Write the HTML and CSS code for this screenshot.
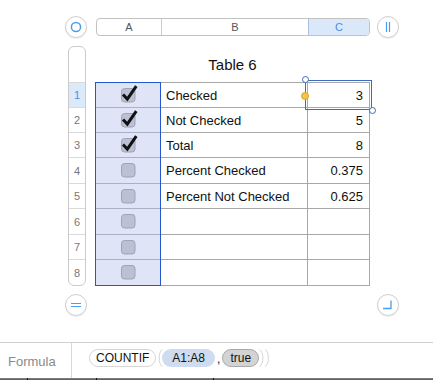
FILE: index.html
```html
<!DOCTYPE html>
<html>
<head>
  <meta charset="utf-8">
  <meta name="viewport" content="width=device-width">
  <title>Table 6</title>
  <link rel="stylesheet" href="styles.css">
</head>
<body>

  <div class="toolbar">
    <button class="round">
      <svg width="12" height="12" viewBox="0 0 12 12"><circle cx="6" cy="6" r="4.6" fill="none" stroke="#4a9cf0" stroke-width="1.5"/></svg>
    </button>
    <div class="colheads">
      <div class="ch cola">A</div>
      <div class="ch colb">B</div>
      <div class="ch colc sel">C</div>
    </div>
    <button class="round">
      <svg width="12" height="12" viewBox="0 0 12 12"><path d="M4.5 1v10M7.5 1v10" stroke="#4a9cf0" stroke-width="1.2"/></svg>
    </button>
  </div>

  <div class="sheet">
    <div class="rowheads">
      <div class="rh cap"></div>
      <div class="rh sel">1</div>
      <div class="rh">2</div>
      <div class="rh">3</div>
      <div class="rh">4</div>
      <div class="rh">5</div>
      <div class="rh">6</div>
      <div class="rh">7</div>
      <div class="rh">8</div>
    </div>

    <div class="tablewrap">
      <div class="title">Table 6</div>
      <div class="grid" id="grid">
        <div class="colsel"></div>
        <div class="cellsel">
          <span class="handle tl"></span>
          <span class="handle br"></span>
          <span class="dot"></span>
        </div>
      </div>
    </div>
  </div>

  <div class="bottom">
    <button class="round">
      <svg width="12" height="12" viewBox="0 0 12 12"><path d="M1 4.5h10M1 7.5h10" stroke="#4a9cf0" stroke-width="1.2"/></svg>
    </button>
    <button class="round">
      <svg width="12" height="12" viewBox="0 0 12 12"><path d="M9 1.5v8h-8" fill="none" stroke="#4a9cf0" stroke-width="1.3"/></svg>
    </button>
  </div>

  <div class="formula">
    <div class="flabel">Formula</div>
    <div class="fbody">
      <span class="pill fn">COUNTIF</span>
      <svg class="paren" width="7" height="18" viewBox="0 0 7 18"><path d="M6.5 0.5C2 2.5 2 15.5 6.5 17.5" fill="none" stroke="#d6d6d6"/></svg>
      <span class="pill ref">A1:A8</span>
      <span class="comma">,</span>
      <span class="pill val">true</span>
      <svg class="paren" width="13" height="18" viewBox="0 0 13 18"><path d="M0.5 0.5C5 2.5 5 15.5 0.5 17.5M6 0.5C10.5 2.5 10.5 15.5 6 17.5" fill="none" stroke="#d6d6d6"/></svg>
    </div>
  </div>

  <div class="strip">
    <span></span><span></span><span></span>
  </div>

  <script>
    const rows = [
      { on: true,  label: 'Checked',             num: '3' },
      { on: true,  label: 'Not Checked',         num: '5' },
      { on: true,  label: 'Total',               num: '8' },
      { on: false, label: 'Percent Checked',     num: '0.375' },
      { on: false, label: 'Percent Not Checked', num: '0.625' },
      { on: false, label: '', num: '' },
      { on: false, label: '', num: '' },
      { on: false, label: '', num: '' }
    ];

    const box = on => `<svg width="18" height="18" viewBox="0 0 18 18">
        <rect x="1.5" y="3.5" width="13.5" height="13.5" rx="3" fill="#bcc0d3" stroke="#9ea3b7"/>
        ${on ? '<path d="M3 9.5l4.3 4.6L16.3 1.2" fill="none" stroke="#111" stroke-width="3"/>' : ''}
      </svg>`;

    const grid = document.getElementById('grid');
    grid.insertAdjacentHTML('afterbegin', rows.map(r =>
      `<div class="cell a">${box(r.on)}</div>
       <div class="cell b">${r.label}</div>
       <div class="cell c">${r.num}</div>`).join(''));
  </script>

</body>
</html>
```

FILE: styles.css
```css
html, body {
  margin: 0;
  padding: 0;
}
body {
  width: 433px;
  height: 380px;
  overflow: hidden;
  background: #fff;
  font-family: "Liberation Sans", Arial, sans-serif;
  color: #111;
}
.round {
  width: 22px;
  height: 22px;
  padding: 0;
  border: 1px solid #cfcfcf;
  border-radius: 50%;
  background: #fff;
  display: flex;
  align-items: center;
  justify-content: center;
  box-shadow: 0 1px 1px rgba(0, 0, 0, 0.06);
}
.toolbar {
  display: flex;
  align-items: center;
  margin-top: 16px;
  padding-left: 65px;
  height: 22px;
}
.colheads {
  display: flex;
  margin: 0 7px 0 9px;
  width: 274px;
  height: 18px;
  box-sizing: border-box;
  border: 1px solid #c2c2c2;
  border-radius: 4px;
  overflow: hidden;
  font-size: 11px;
  color: #555;
}
.ch {
  display: flex;
  align-items: center;
  justify-content: center;
  box-sizing: border-box;
}
.cola { width: 64px; }
.colb { width: 147px; border-left: 1px solid #cbcbcb; }
.colc { flex: 1; border-left: 1px solid #c2c2c2; }
.ch.sel {
  background: #dbe8f9;
  color: #4a90e2;
  border-left-color: #a9bfdc;
}
.sheet {
  display: flex;
  margin-top: 8px;
}
.rowheads {
  margin-left: 68px;
  width: 18px;
  box-sizing: border-box;
  border: 1px solid #cbcbcb;
  border-radius: 6px;
  overflow: hidden;
  align-self: flex-start;
}
.rh {
  height: 25px;
  box-sizing: border-box;
  border-bottom: 1px solid #dadada;
  display: flex;
  align-items: center;
  justify-content: center;
  font-size: 11px;
  color: #777;
}
.rh.cap { height: 36px; }
.rh:nth-child(5), .rh:nth-child(7), .rh:nth-child(9) { height: 26px; }
.rh:last-child { border-bottom: none; height: 25px; }
.rh.sel {
  background: #dce9fa;
  color: #4a90e2;
}
.tablewrap {
  margin-left: 9px;
  width: 275px;
}
.title {
  height: 36px;
  line-height: 38px;
  text-align: center;
  font-size: 15px;
  color: #111;
}
.grid {
  position: relative;
  display: grid;
  grid-template-columns: 65px 147px 62px;
  grid-template-rows: 25px 25px 25px 26px 25px 26px 25px 26px;
  border-top: 1px solid #a8a8a8;
  border-left: 1px solid #a8a8a8;
}
.cell {
  box-sizing: border-box;
  border-right: 1px solid #a8a8a8;
  border-bottom: 1px solid #a8a8a8;
  display: flex;
  align-items: center;
  font-size: 13px;
  white-space: nowrap;
}
.cell.a {
  background: #dfe5f7;
  justify-content: center;
  border-bottom-color: #a9b1c6;
}
.cell.a svg { margin: -3px 0 0 1px; }
.cell.b { padding-left: 5px; }
.cell.c {
  justify-content: flex-end;
  padding-right: 6px;
}
.colsel {
  position: absolute;
  top: -1px;
  left: -1px;
  width: 66px;
  height: 204px;
  box-sizing: border-box;
  border: 1px solid #2457cf;
  pointer-events: none;
}
.cellsel {
  position: absolute;
  top: -3px;
  left: 209px;
  width: 67px;
  height: 30px;
  box-sizing: border-box;
  border: 1px solid #3a6bbd;
}
.handle {
  position: absolute;
  width: 7px;
  height: 7px;
  box-sizing: border-box;
  border: 1px solid #3a6bbd;
  border-radius: 50%;
  background: #fff;
}
.handle.tl { top: -5px; left: -4px; }
.handle.br { bottom: -5px; right: -5px; }
.dot {
  position: absolute;
  top: 11px;
  left: -5px;
  width: 8px;
  height: 8px;
  box-sizing: border-box;
  border-radius: 50%;
  background: #f6c444;
  border: 1px solid #dba52a;
}
.bottom {
  display: flex;
  justify-content: space-between;
  margin-top: 8px;
  padding: 0 34px 0 65px;
}
.formula {
  display: flex;
  margin-top: 26px;
  height: 35px;
  border-top: 1px solid #d0d0d0;
}
.flabel {
  width: 72px;
  border-right: 1px solid #d8d8d8;
  padding-left: 8px;
  box-sizing: border-box;
  font-size: 13px;
  color: #8a8a8a;
  display: flex;
  align-items: center;
  padding-top: 2px;
}
.fbody {
  display: flex;
  align-items: flex-start;
  padding: 6px 0 0 17px;
}
.pill {
  height: 18px;
  box-sizing: border-box;
  border-radius: 9px;
  font-size: 12px;
  line-height: 17px;
  color: #111;
  white-space: nowrap;
}
.pill.fn {
  border: 1px solid #d6d6d6;
  padding: 0 6px;
  background: #fff;
}
.pill.ref {
  background: #cfdbf1;
  padding: 0 10px;
  line-height: 18px;
  margin-left: -1px;
}
.pill.val {
  background: #d3d3d3;
  border: 1px solid #a9a9a9;
  padding: 0 7px;
}
.comma {
  font-size: 12px;
  line-height: 20px;
  margin: 0 2px 0 2px;
}
.strip {
  display: flex;
  height: 3px;
  background: linear-gradient(#8a8a8a, #3c3c3c);
}
.strip span {
  width: 0;
  border-left: 1px solid #111;
}
.strip span:nth-child(1) { margin-left: 27px; }
.strip span:nth-child(2) { margin-left: 68px; }
.strip span:nth-child(3) { margin-left: 116px; }
```
